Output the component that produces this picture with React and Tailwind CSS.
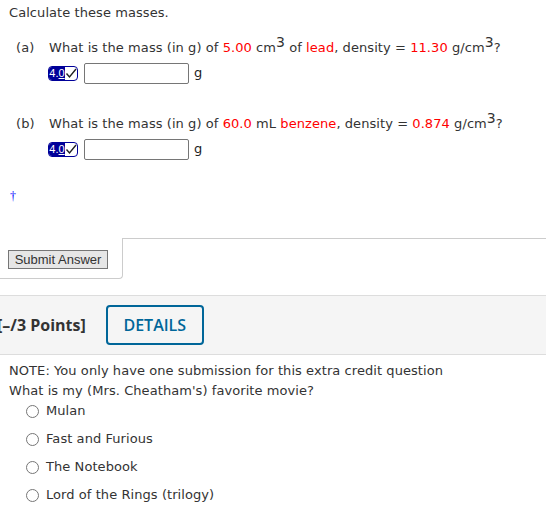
const Answer = () => (
  <div className="flex items-center h-[24px] ml-[48px] mt-[3px]">
    <div className="flex items-center w-[30px] h-[15px] rounded-[4px] border border-[#000099] bg-white overflow-hidden">
      <span className="bg-[#000099] text-white h-full w-[16px] shrink-0 text-[11px] leading-[13px] tracking-normal font-['Liberation_Sans',sans-serif] text-center">
        4.<span className="underline">0</span>
      </span>
      <svg width="12" height="12" viewBox="0 0 12 12" className="shrink-0">
        <path d="M1.5 6.5 L4.5 10 L11 2" fill="none" stroke="#222" strokeWidth="1.4" />
      </svg>
    </div>
    <div className="ml-[6px] w-[105px] h-[21px] rounded-[2px] border border-[#767676] bg-white" />
    <span className="ml-[5px] text-[#222]">g</span>
  </div>
)

const Radio = ({ label, className }) => (
  <div className={`flex items-center h-[20px] ml-[26px] ${className || ''}`}>
    <span className="w-[13px] h-[13px] rounded-full border border-[#767676] bg-white" />
    <span className="ml-[7px]">{label}</span>
  </div>
)

const Cube = () => <sup className="text-[14px] leading-none top-[-5px]">3</sup>

function App() {
  const red = 'text-[#ff0000]'
  return (
    <div className="w-[546px] h-[529px] overflow-hidden bg-white text-[#333] text-[13px] leading-[20px] tracking-[0.07px] font-['DejaVu_Sans',Verdana,sans-serif]">
      <div className="pl-[9px] pt-[3px]">Calculate these masses.</div>

      <div className="flex mt-[15px] h-[20px] items-end pl-[16px]">
        <span className="w-[33px]">(a)</span>
        <span>
          What is the mass (in g) of <span className={red}>5.00</span> cm<Cube /> of <span className={red}>lead</span>, density = <span className={red}>11.30</span> g/cm<Cube />?
        </span>
      </div>
      <Answer />

      <div className="flex mt-[29px] h-[20px] items-end pl-[16px]">
        <span className="w-[33px]">(b)</span>
        <span>
          What is the mass (in g) of <span className={red}>60.0</span> mL <span className={red}>benzene</span>, density = <span className={red}>0.874</span> g/cm<Cube />?
        </span>
      </div>
      <Answer />

      <div className="pl-[10px] mt-[25px] h-[20px] text-[#0000ff] text-[12px] font-['Liberation_Serif',serif]">†</div>

      <div className="flex mt-[32px] h-[41px]">
        <div className="w-[123px] h-[41px] border-r border-b border-[#cccccc] rounded-br-[4px] pl-[8px] pt-[12px]">
          <button className="block w-[100px] h-[19px] bg-[#e6e6e6] border border-[#767676] text-[13px] tracking-normal leading-[17px] text-[#333] font-['Liberation_Sans',sans-serif]">
            Submit Answer
          </button>
        </div>
        <div className="flex-1 border-t border-[#cccccc]" />
      </div>

      <div className="mt-[16px] h-[60px] bg-[#f5f5f5] border-y border-[#dddddd] flex items-center tracking-normal font-['Open_Sans',sans-serif]">
        <span className="font-bold text-[16px] text-[#333] -ml-[3px]">[–/3 Points]</span>
        <span className="ml-[20px] w-[98px] h-[40px] rounded-[4px] border-2 border-[#006699] text-[#006699] font-semibold text-[16px] flex items-center justify-center">
          DETAILS
        </span>
      </div>

      <div className="pl-[9px] mt-[6px]">NOTE: You only have one submission for this extra credit question</div>
      <div className="pl-[9px]">What is my (Mrs. Cheatham's) favorite movie?</div>
      <Radio label="Mulan" />
      <Radio label="Fast and Furious" className="mt-[8px]" />
      <Radio label="The Notebook" className="mt-[8px]" />
      <Radio label="Lord of the Rings (trilogy)" className="mt-[8px]" />
    </div>
  )
}

export default App
